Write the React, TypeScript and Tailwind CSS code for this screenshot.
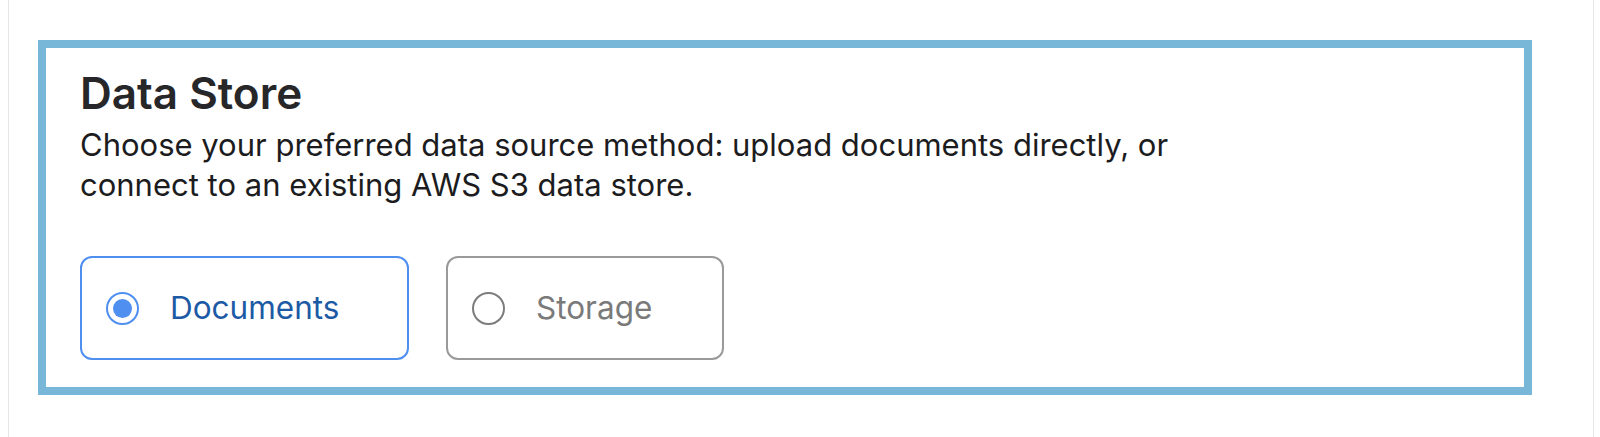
import React from "react";

function Radio({ checked }: { checked: boolean }) {
  return checked ? (
    <span className="flex h-[33px] w-[33px] shrink-0 items-center justify-center rounded-full border-[2.5px] border-[#4f8ff0] bg-white">
      <span className="h-[19px] w-[19px] rounded-full bg-[#4f8ff0]" />
    </span>
  ) : (
    <span className="h-[33px] w-[33px] shrink-0 rounded-full border-2 border-[#7c7c7c] bg-white" />
  );
}

export default function App() {
  return (
    <div
      className="h-[437px] w-full bg-white"
      style={{ fontFamily: "Inter, 'Noto Sans', sans-serif" }}
    >
      <div className="ml-[8px] h-full w-[1586px] border-x border-[#e6e6e6] pl-[29px] pt-[40px]">
        <div className="h-[355px] w-[1494px] border-8 border-[#78b7d7] bg-white pl-[34px] pt-[23px]">
          <h1 className="text-[44px] font-semibold leading-[44px] text-[#27272a]">
            Data Store
          </h1>
          <p className="mt-[10px] w-[1100px] text-[31px] leading-[40px] text-[#1c1c1e]">
            Choose your preferred data source method: upload documents directly, or
            connect to an existing AWS S3 data store.
          </p>
          <div className="mt-[51px] flex gap-[37px]">
            <div className="flex h-[104px] w-[329px] items-center gap-[31px] rounded-[12px] border-2 border-[#4f8ff0] pl-[24px]">
              <Radio checked />
              <span className="text-[31.5px] text-[#1d5aa5]">Documents</span>
            </div>
            <div className="flex h-[104px] w-[278px] items-center gap-[31px] rounded-[12px] border-2 border-[#9a9a9a] pl-[24px]">
              <Radio checked={false} />
              <span className="text-[31.5px] text-[#7a7a7a]">Storage</span>
            </div>
          </div>
        </div>
      </div>
    </div>
  );
}
